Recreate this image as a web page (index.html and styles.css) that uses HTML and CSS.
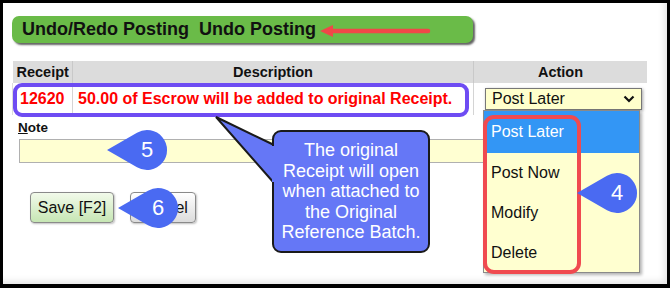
FILE: index.html
```html
<!DOCTYPE html>
<html>
<head>
<meta charset="utf-8">
<link rel="stylesheet" href="styles.css">
</head>
<body>
<div class="frame">
  <div class="titlebar">
    <span class="title">Undo/Redo Posting</span>
    <span class="title sub">Undo Posting</span>
    <svg class="arrow" width="112" height="14" viewBox="0 0 112 14">
      <path d="M0 7 L13 1 L13 13 Z" fill="#f04848"/>
      <line x1="10" y1="7" x2="108" y2="7" stroke="#f04848" stroke-width="4.5" stroke-linecap="round"/>
    </svg>
  </div>

  <table class="grid">
    <thead>
      <tr>
        <th class="c-receipt">Receipt</th>
        <th class="c-desc">Description</th>
        <th class="c-action">Action</th>
      </tr>
    </thead>
    <tbody>
      <tr>
        <td class="c-receipt red">12620</td>
        <td class="c-desc red">50.00 of Escrow will be added to original Receipt.</td>
        <td class="c-action">
          <div class="select">
            <span>Post Later</span>
            <svg width="12" height="8" viewBox="0 0 12 8"><path d="M1.5 1.5 L6 6 L10.5 1.5" fill="none" stroke="#111" stroke-width="2.2"/></svg>
          </div>
        </td>
      </tr>
    </tbody>
  </table>

  <div class="note-label"><u>N</u>ote</div>
  <div class="note-input"></div>

  <div class="buttons">
    <div class="btn save">Save [F2]</div>
    <div class="btn cancel">Cancel</div>
  </div>

  <!-- overlays -->
  <div class="purple-box"></div>

  <div class="dropdown">
    <div class="opt active">Post Later</div>
    <div class="opt">Post Now</div>
    <div class="opt">Modify</div>
    <div class="opt">Delete</div>
  </div>
  <div class="red-box"></div>

  <svg class="pointer" width="62" height="72" viewBox="0 0 62 72">
    <path d="M2 2 L60 30 L60 68 Z" fill="#6577f6" stroke="#1a1a1a" stroke-width="2" stroke-linejoin="miter"/>
  </svg>
  <div class="tooltip">The original<br>Receipt will open<br>when attached to<br>the Original<br>Reference Batch.</div>
  <svg class="pointer-cover" width="6" height="36" viewBox="0 0 6 36"><rect width="6" height="36" fill="#6577f6"/></svg>

  <div class="drop d4">
    <svg width="62" height="42" viewBox="-41 -21 62 42"><path d="M-40 0 L-10 -17.3 A20 20 0 1 1 -10 17.3 Z" fill="#4a6af2"/></svg>
    <span>4</span>
  </div>
  <div class="drop d5">
    <svg width="62" height="42" viewBox="-41 -21 62 42"><path d="M-40 0 L-10 -17.3 A20 20 0 1 1 -10 17.3 Z" fill="#4a6af2"/></svg>
    <span>5</span>
  </div>
  <div class="drop d6">
    <svg width="62" height="42" viewBox="-41 -21 62 42"><path d="M-40 0 L-10 -17.3 A20 20 0 1 1 -10 17.3 Z" fill="#4a6af2"/></svg>
    <span>6</span>
  </div>
</div>
</body>
</html>
```

FILE: styles.css
```css
html, body {
  margin: 0;
  padding: 0;
  background: #000;
}
body {
  width: 670px;
  height: 288px;
  overflow: hidden;
  font-family: "Liberation Sans", Arial, sans-serif;
}
.frame {
  position: relative;
  margin: 3px 0 0 3px;
  width: 664px;
  height: 281px;
  background: #fff;
  box-sizing: border-box;
  padding: 13px 0 0 9px;
  box-shadow: inset -5px -5px 6px -2px rgba(0,0,0,0.10);
}
.titlebar {
  width: 461px;
  height: 27px;
  background: #6abb48;
  border-radius: 7px;
  box-shadow: 2px 2px 2px rgba(60,60,60,0.8);
  display: flex;
  align-items: center;
  padding-left: 10px;
  box-sizing: border-box;
}
.title {
  font-size: 18px;
  font-weight: bold;
  color: #111;
  line-height: 27px;
  white-space: nowrap;
}
.title.sub {
  margin-left: 10px;
}
.arrow {
  margin-left: 4px;
  margin-top: 2px;
}
.grid {
  margin-top: 18px;
  width: 633px;
  border-collapse: collapse;
  table-layout: fixed;
}
.grid th {
  background: #dcdcdc;
  height: 22px;
  padding: 0;
  font-size: 14.5px;
  font-weight: bold;
  color: #111;
  border-left: 1px solid #c9c9c9;
}
.grid th:first-child { border-left: none; }
.grid td {
  height: 32px;
  padding: 0;
  border-left: 1px solid #d4d4d4;
  font-size: 16px;
}
.grid td:first-child { border-left: 1px solid #dcdcdc; }
.grid .c-receipt { width: 60px; text-align: left; padding-left: 4px; box-sizing: border-box; }
.grid .c-desc { width: 400px; text-align: center; }
.grid td.c-desc { text-align: left; padding-left: 5px; }
.grid .c-action { width: 173px; text-align: center; }
.grid td.c-action { text-align: left; padding-left: 11px; }
.red {
  color: #ff0000;
  font-weight: bold;
  white-space: nowrap;
}
.grid td.c-receipt { padding-left: 7px; }
.select {
  width: 157px;
  height: 22px;
  box-sizing: border-box;
  background: #ffffcc;
  border: 1px solid #777;
  box-shadow: 1px 1px 3px rgba(0,0,0,0.35);
  display: flex;
  align-items: center;
  justify-content: space-between;
  padding: 0 6px 0 6px;
  font-size: 16px;
  color: #111;
}
.note-label {
  margin-top: 5px;
  margin-left: 6px;
  font-size: 13.5px;
  font-weight: bold;
  line-height: 16px;
  height: 16px;
  color: #111;
}
.note-input {
  margin-top: 3px;
  margin-left: 7px;
  width: 600px;
  height: 24px;
  box-sizing: border-box;
  background: #ffffd2;
  border: 1px solid #b0b0b0;
}
.buttons {
  display: flex;
  gap: 16px;
  margin-top: 29px;
  margin-left: 18px;
}
.btn {
  height: 31px;
  box-sizing: border-box;
  border: 1px solid #8a8a8a;
  border-radius: 4px;
  font-size: 16px;
  color: #111;
  display: flex;
  align-items: center;
  justify-content: center;
  box-shadow: 1px 1px 2px rgba(0,0,0,0.25);
}
.save {
  width: 84px;
  background: linear-gradient(#f2faea, #c6e6b4);
}
.cancel {
  width: 66px;
  background: linear-gradient(#ffffff, #dcdcdc);
}
.purple-box {
  position: absolute;
  left: 10px;
  top: 80px;
  width: 456px;
  height: 34px;
  box-sizing: border-box;
  border: 4px solid #6e4cf3;
  border-radius: 9px;
}
.dropdown {
  position: absolute;
  left: 480px;
  top: 107px;
  width: 157px;
  height: 163px;
  box-sizing: border-box;
  background: #ffffd0;
  border: 1px solid #8a8a8a;
  box-shadow: 2px 2px 3px rgba(0,0,0,0.3);
  padding-top: 0;
}
.opt {
  height: 40px;
  line-height: 40px;
  padding-left: 7px;
  font-size: 16px;
  color: #111;
}
.opt.active {
  background: #3396f5;
  color: #fff;
  height: 42px;
  line-height: 42px;
}
.red-box {
  position: absolute;
  left: 480px;
  top: 112px;
  width: 98px;
  height: 159px;
  box-sizing: border-box;
  border: 4px solid #f04a50;
  border-radius: 11px;
}
.tooltip {
  position: absolute;
  left: 269px;
  top: 127px;
  width: 158px;
  height: 123px;
  box-sizing: border-box;
  background: #6577f6;
  border: 2px solid #1a1a1a;
  border-radius: 9px;
  color: #fff;
  font-size: 18px;
  line-height: 20.5px;
  text-align: center;
  padding-top: 8px;
  white-space: nowrap;
}
.pointer {
  position: absolute;
  left: 211px;
  top: 112px;
}
.pointer-cover {
  position: absolute;
  left: 269px;
  top: 143px;
}
.drop {
  position: absolute;
  width: 62px;
  height: 42px;
}
.drop svg {
  position: absolute;
  left: 0;
  top: 0;
}
.drop span {
  position: absolute;
  left: 33px;
  top: 0;
  width: 16px;
  text-align: center;
  line-height: 42px;
  color: #fff;
  font-size: 22px;
}
.d4 { left: 573px; top: 169px; }
.d5 { left: 103px; top: 126px; }
.d6 { left: 114px; top: 184px; }
```
